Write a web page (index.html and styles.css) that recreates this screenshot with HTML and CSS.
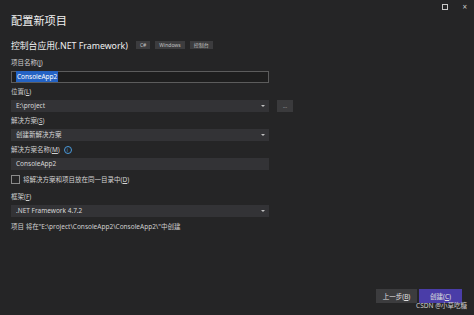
FILE: index.html
```html
<!DOCTYPE html>
<html lang="zh-CN">
<head>
    <meta charset="UTF-8">
    <title>配置新项目</title>
    <link rel="stylesheet" href="styles.css">
</head>
<body>
    <div class="window">
        <div class="titlebar">
            <span class="win-btn max"></span>
            <span class="win-btn close">×</span>
        </div>

        <div class="content">
            <h1>配置新项目</h1>
            <div class="subtitle">
                <span class="template">控制台应用(.NET Framework)</span>
                <span class="tag">C#</span>
                <span class="tag">Windows</span>
                <span class="tag">控制台</span>
            </div>

            <div class="field">
                <label>项目名称(<u>J</u>)</label>
                <div class="input focus"><span class="selected">ConsoleApp2</span></div>
            </div>

            <div class="field">
                <label>位置(<u>L</u>)</label>
                <div class="row">
                    <div class="input select">E:\project<span class="caret"></span></div>
                    <div class="browse">...</div>
                </div>
            </div>

            <div class="field">
                <label>解决方案(<u>S</u>)</label>
                <div class="input select">创建新解决方案<span class="caret"></span></div>
            </div>

            <div class="field">
                <label>解决方案名称(<u>M</u>) <span class="info">i</span></label>
                <div class="input">ConsoleApp2</div>
            </div>

            <div class="check-row">
                <span class="checkbox"></span>
                <span>将解决方案和项目放在同一目录中(<u>D</u>)</span>
            </div>

            <div class="field framework">
                <label>框架(<u>F</u>)</label>
                <div class="input select">.NET Framework 4.7.2<span class="caret"></span></div>
            </div>

            <p class="note">项目 将在"E:\project\ConsoleApp2\ConsoleApp2\"中创建</p>
        </div>

        <div class="footer">
            <button class="btn">上一步(<u>B</u>)</button>
            <button class="btn primary">创建(<u>C</u>)</button>
        </div>
        <div class="watermark">CSDN @小草吃糖</div>
    </div>
</body>
</html>
```

FILE: styles.css
```css
body {
    margin: 0;
    background-color: #252526;
    color: #d4d4d4;
    font-family: "Noto Sans", "Noto Sans CJK SC", sans-serif;
    font-size: 6.5px;
}
.window {
    position: relative;
    height: 315px;
    display: flex;
    flex-direction: column;
}
.titlebar {
    height: 12px;
    display: flex;
    justify-content: flex-end;
    align-items: flex-start;
    padding-right: 7px;
    gap: 14px;
}
.win-btn {
    margin-top: 4px;
    color: #c8c8c8;
}
.max {
    width: 4px;
    height: 4px;
    border: 1px solid #c8c8c8;
}
.close {
    font-size: 8px;
    line-height: 5px;
    margin-top: 4px;
}
.content {
    padding: 0 205px 0 11px;
}
h1 {
    margin: 2px 0 0;
    font-size: 11.2px;
    line-height: 14px;
    font-weight: normal;
    color: #f1f1f1;
}
.subtitle {
    margin-top: 12px;
    height: 10px;
    display: flex;
    align-items: center;
    gap: 5px;
}
.template {
    font-size: 8.8px;
    color: #f1f1f1;
    margin-right: 3px;
}
.tag {
    background-color: #3c3c3e;
    color: #c0c0c0;
    font-size: 5px;
    line-height: 8px;
    padding: 0 4px;
}
.field {
    margin-top: 8px;
}
.field + .field {
    margin-top: 4px;
}
label {
    display: block;
    height: 10px;
    line-height: 10px;
    color: #d0d0d0;
    margin-bottom: 3px;
}
.row {
    display: flex;
    gap: 8px;
    width: 282px;
}
.row .input {
    flex: 1;
}
.input {
    position: relative;
    width: 258px;
    height: 12px;
    line-height: 12px;
    box-sizing: border-box;
    padding-left: 5px;
    background-color: #333336;
    color: #d8d8d8;
}
.input.focus {
    background-color: #1e1e1e;
    border: 1px solid #5c5c5c;
    line-height: 10px;
    padding-left: 4px;
}
.selected {
    background-color: #2463c4;
    color: #ffffff;
    padding: 1px;
}
.caret {
    position: absolute;
    right: 4px;
    top: 5px;
    border-left: 2px solid transparent;
    border-right: 2px solid transparent;
    border-top: 2px solid #c0c0c0;
}
.browse {
    width: 16px;
    height: 12px;
    line-height: 13px;
    text-align: center;
    background-color: #3a3a3c;
    color: #b0b0b0;
    font-size: 5px;
}
.info {
    display: inline-block;
    width: 6px;
    height: 6px;
    line-height: 6px;
    border: 1px solid #4a9bdc;
    border-radius: 50%;
    color: #4a9bdc;
    font-size: 5px;
    text-align: center;
    vertical-align: middle;
    margin-left: 2px;
}
.check-row {
    margin-top: 4px;
    height: 10px;
    display: flex;
    align-items: center;
    gap: 3px;
}
.checkbox {
    width: 7px;
    height: 7px;
    border: 1px solid #8a8a8a;
}
.framework {
    margin-top: 8px;
}
.note {
    margin: 5px 0 0;
    line-height: 10px;
    color: #d0d0d0;
}
.footer {
    margin-top: auto;
    margin-bottom: 12px;
    padding-right: 12px;
    display: flex;
    justify-content: flex-end;
    gap: 2px;
}
.btn {
    height: 14px;
    padding: 0;
    border: none;
    font-family: inherit;
    font-size: 6.5px;
    color: #e0e0e0;
    background-color: #3c3c3e;
    width: 41px;
}
.btn.primary {
    width: 43px;
    background-color: #4a3da8;
}
.watermark {
    position: absolute;
    right: 7px;
    bottom: 5px;
    font-size: 6.5px;
    color: #d0d0d0;
}
```
